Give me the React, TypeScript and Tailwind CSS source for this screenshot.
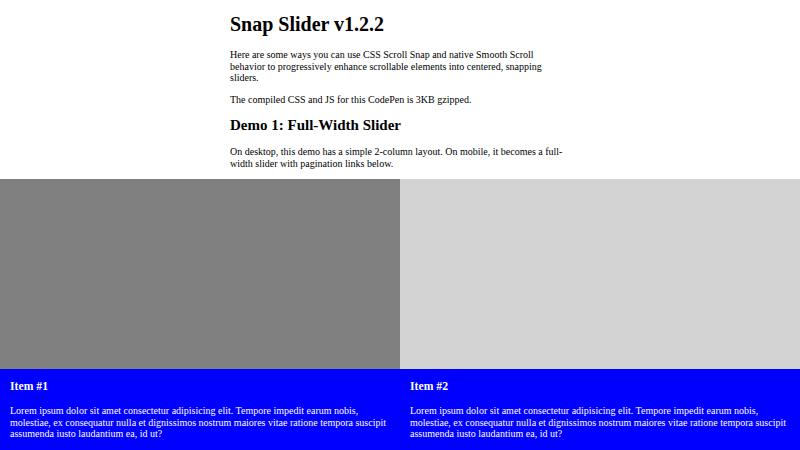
const items = [
  { id: 1, shade: "bg-[#808080]" },
  { id: 2, shade: "bg-[#d3d3d3]" },
];

const lorem =
  "Lorem ipsum dolor sit amet consectetur adipisicing elit. Tempore impedit earum nobis, molestiae, ex consequatur nulla et dignissimos nostrum maiores vitae ratione tempora suscipit assumenda iusto laudantium ea, id ut?";

export default function App() {
  return (
    <div className="h-[450px] overflow-hidden bg-white font-['Liberation_Serif',serif] text-[10px] leading-[11.5px] text-black">
      {/* Intro copy */}
      <div className="mx-auto w-[340px] pt-[13px] pb-[10px]">
        <h1 className="text-[20px] leading-[23px] font-bold mb-[13px]">Snap Slider v1.2.2</h1>
        <p className="mb-[10px]">
          Here are some ways you can use CSS Scroll Snap and native Smooth Scroll
          behavior to progressively enhance scrollable elements into centered,
          snapping sliders.
        </p>
        <p>The compiled CSS and JS for this CodePen is 3KB gzipped.</p>
        <h2 className="text-[15px] leading-[17px] font-bold my-[12px]">Demo 1: Full-Width Slider</h2>
        <p>
          On desktop, this demo has a simple 2-column layout. On mobile, it becomes
          a full-width slider with pagination links below.
        </p>
      </div>

      {/* Slides */}
      <div className="grid grid-cols-2">
        {items.map((item) => (
          <div key={item.id} className="flex flex-col">
            <div className={`h-[190px] ${item.shade}`} />
            <div className="bg-[#0000ff] px-[10px] pt-[11px] pb-[12px] text-white">
              <h3 className="text-[11.7px] leading-[13.4px] font-bold mb-[12px]">Item #{item.id}</h3>
              <p>{lorem}</p>
            </div>
          </div>
        ))}
      </div>
    </div>
  );
}
